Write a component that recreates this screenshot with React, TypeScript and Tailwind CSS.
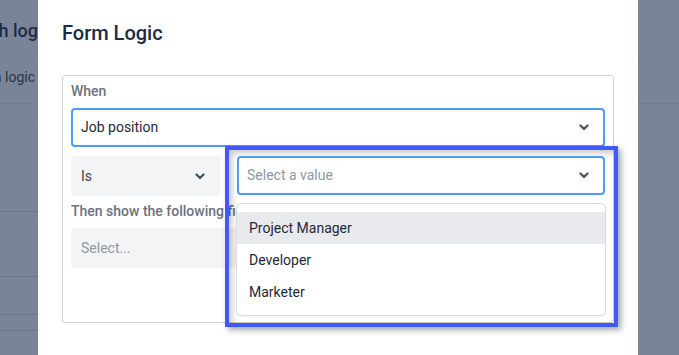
import React from "react";

function Chevron() {
  return (
    <svg width="10" height="7" viewBox="0 0 10 7" fill="none" className="shrink-0">
      <path d="M1.5 1.5L5 5L8.5 1.5" stroke="#475063" strokeWidth="2.2" strokeLinecap="round" strokeLinejoin="round" />
    </svg>
  );
}

export default function App() {
  return (
    <div className="relative w-[679px] h-[355px] overflow-hidden bg-[#7a8499] font-['Roboto',sans-serif]">
      {/* background page under the overlay */}
      <div className="flex flex-col w-full">
        <div className="h-[62px] border-b border-[#77819a] flex items-start pt-[17px]">
          <div className="w-[52px] flex justify-end whitespace-nowrap">
            <span className="text-[18px] leading-[28px] font-medium text-[#1e2a45]">Branch logic</span>
          </div>
        </div>
        <div className="h-[42px] border-b border-[#727c92] flex items-start pt-[5px]">
          <div className="w-[35px] flex justify-end whitespace-nowrap">
            <span className="text-[14px] leading-[20px] text-[#2a3447]">Branch logic</span>
          </div>
        </div>
        <div className="w-[38px] flex flex-col">
          <div className="h-[21px] border-b border-[#77819a]" />
          <div className="h-[87px] border-b border-[#6b758a]" />
          <div className="h-[10px] border-b border-[#77819a]" />
          <div className="h-[55px] border-b border-[#6b758a]" />
          <div className="h-[38px] border-b border-[#6b758a]" />
          <div className="h-[16px] border-b border-[#6b758a]" />
        </div>
      </div>

      {/* modal */}
      <div className="absolute left-[38px] top-0 w-[600px] h-[355px] bg-white px-6">
        <h2 className="pt-[19px] text-[20px] leading-[28px] font-medium text-[#1e2a45]">Form Logic</h2>
        <div className="mt-7 h-[248px] border border-[#d1d1d1] rounded-[3px] px-2 pt-[5px]">
          <div className="text-[14px] leading-5 font-medium text-[#6b7280]">When</div>
          <div className="mt-[7px] h-[39px] border-2 border-[#4d9cfb] rounded-[4px] flex items-center justify-between pl-[8px] pr-[14px]">
            <span className="text-[14px] text-[#1f2937]">Job position</span>
            <Chevron />
          </div>
          <div className="mt-[9px] flex gap-4">
            <div className="w-[150px] h-10 bg-[#f3f4f6] rounded-[4px] flex items-center justify-between pl-[10px] pr-[16px]">
              <span className="text-[14px] text-[#374151]">Is</span>
              <Chevron />
            </div>
            <div className="relative z-20 flex-1">
              <div className="h-[39px] bg-white border-2 border-[#4d9cfb] rounded-[4px] flex items-center justify-between pl-[8px] pr-[14px]">
                <span className="text-[14px] text-[#8f97a4]">Select a value</span>
                <Chevron />
              </div>
              <div className="absolute left-[-1px] right-[-1px] top-[47px] h-[113px] bg-white border border-[#dcdcdc] rounded-[5px] py-2 shadow-[0_1px_3px_rgba(0,0,0,0.06)]">
                <div className="h-8 px-3 flex items-center bg-[#e9eaee] text-[14px] text-[#1f2937]">Project Manager</div>
                <div className="h-8 px-3 flex items-center text-[14px] text-[#1f2937]">Developer</div>
                <div className="h-8 px-3 flex items-center text-[14px] text-[#1f2937]">Marketer</div>
              </div>
            </div>
          </div>
          <div className="mt-[5px] text-[14px] leading-5 font-medium text-[#6b7280] whitespace-nowrap">Then show the following fields</div>
          <div className="mt-[7px] h-10 bg-[#f3f4f6] rounded-[4px] flex items-center pl-[10px]">
            <span className="text-[14px] text-[#8f97a4]">Select...</span>
          </div>
        </div>
      </div>

      {/* highlight annotation */}
      <div className="absolute left-[225px] top-[146px] w-[393px] h-[181px] z-10 border-4 border-[#4157ff] shadow-[3px_3px_6px_rgba(0,0,0,0.35),inset_3px_3px_6px_rgba(0,0,0,0.22)]" />
    </div>
  );
}
